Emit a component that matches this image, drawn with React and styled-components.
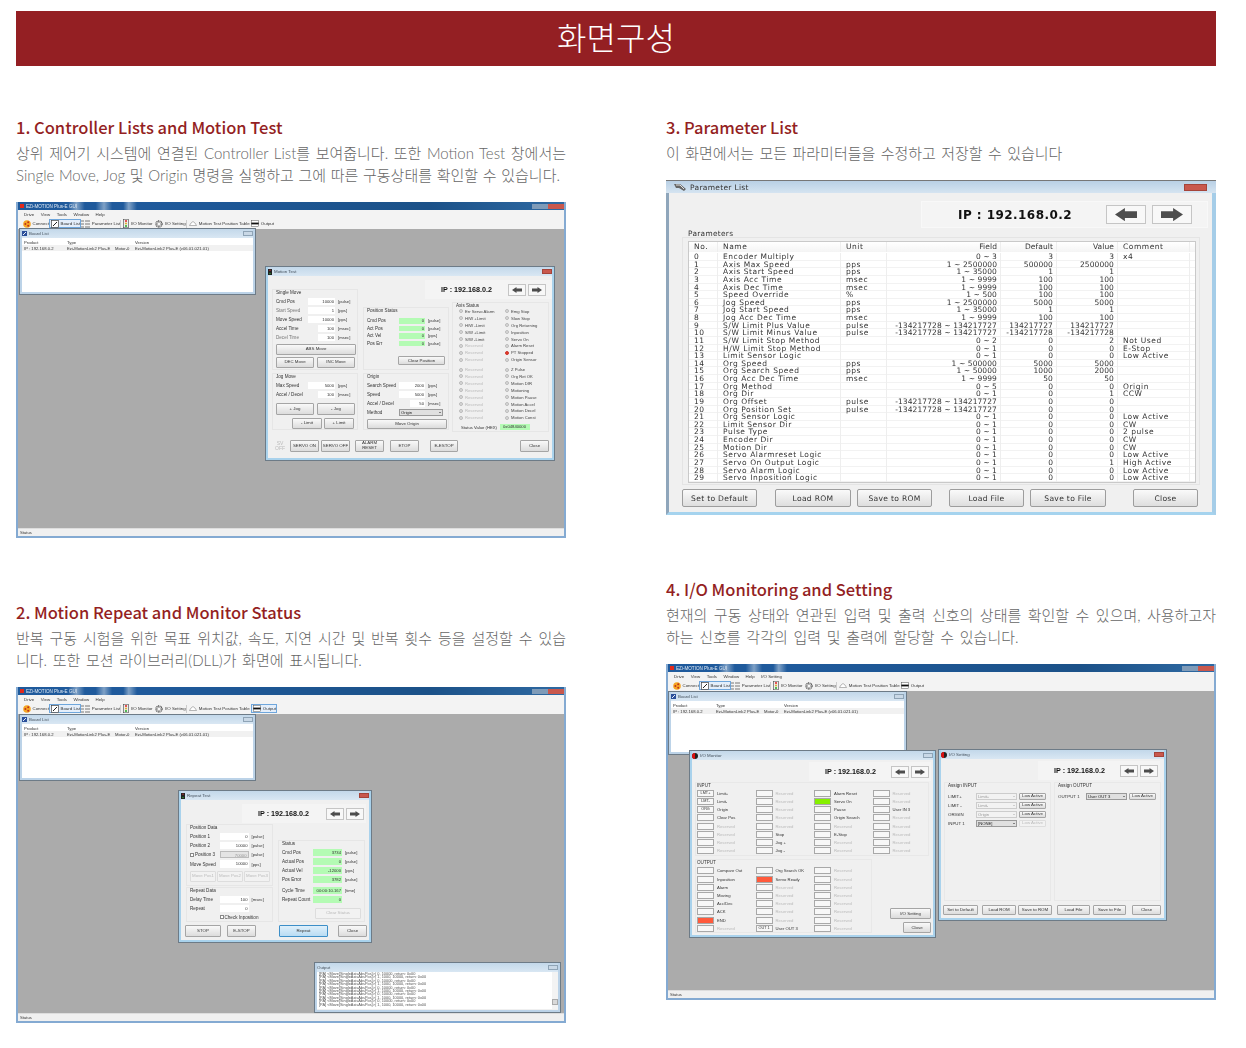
import React from 'react'
import styled, { createGlobalStyle } from 'styled-components'

const GlobalStyle = createGlobalStyle`
  html, body { margin: 0; padding: 0; background: #fff; }
  * { box-sizing: border-box; }
`

const TOOLS = [
  { name: 'Connect', icon: 'connect', w: 26 },
  { name: 'Board List', icon: 'board', w: 29, boxed: true },
  { name: 'Parameter List', icon: 'param', w: 38, sep: true },
  { name: 'I/O Monitor', icon: 'monitor', w: 32 },
  { name: 'I/O Setting', icon: 'gear', w: 31, sep: true },
  { name: 'Motion Test', icon: 'motion', w: 33 },
  { name: 'Position Table', w: 29 },
  { name: 'Output', icon: 'output', w: 24 },
]

const PARAMS = [
  ['Encoder Multiply', '', '0 ~ 3', '3', '3', 'x4'],
  ['Axis Max Speed', 'pps', '1 ~ 2500000', '500000', '2500000', ''],
  ['Axis Start Speed', 'pps', '1 ~ 35000', '1', '1', ''],
  ['Axis Acc Time', 'msec', '1 ~ 9999', '100', '100', ''],
  ['Axis Dec Time', 'msec', '1 ~ 9999', '100', '100', ''],
  ['Speed Override', '%', '1 ~ 500', '100', '100', ''],
  ['Jog Speed', 'pps', '1 ~ 2500000', '5000', '5000', ''],
  ['Jog Start Speed', 'pps', '1 ~ 35000', '1', '1', ''],
  ['Jog Acc Dec Time', 'msec', '1 ~ 9999', '100', '100', ''],
  ['S/W Limit Plus Value', 'pulse', '-134217728 ~ 134217727', '134217727', '134217727', ''],
  ['S/W Limit Minus Value', 'pulse', '-134217728 ~ 134217727', '-134217728', '-134217728', ''],
  ['S/W Limit Stop Method', '', '0 ~ 2', '0', '2', 'Not Used'],
  ['H/W Limit Stop Method', '', '0 ~ 1', '0', '0', 'E-Stop'],
  ['Limit Sensor Logic', '', '0 ~ 1', '0', '0', 'Low Active'],
  ['Org Speed', 'pps', '1 ~ 500000', '5000', '5000', ''],
  ['Org Search Speed', 'pps', '1 ~ 50000', '1000', '2000', ''],
  ['Org Acc Dec Time', 'msec', '1 ~ 9999', '50', '50', ''],
  ['Org Method', '', '0 ~ 5', '0', '0', 'Origin'],
  ['Org Dir', '', '0 ~ 1', '0', '1', 'CCW'],
  ['Org Offset', 'pulse', '-134217728 ~ 134217727', '0', '0', ''],
  ['Org Position Set', 'pulse', '-134217728 ~ 134217727', '0', '0', ''],
  ['Org Sensor Logic', '', '0 ~ 1', '0', '0', 'Low Active'],
  ['Limit Sensor Dir', '', '0 ~ 1', '0', '0', 'CW'],
  ['Pulse Type', '', '0 ~ 1', '0', '0', '2 pulse'],
  ['Encoder Dir', '', '0 ~ 1', '0', '0', 'CW'],
  ['Motion Dir', '', '0 ~ 1', '0', '0', 'CW'],
  ['Servo Alarmreset Logic', '', '0 ~ 1', '0', '0', 'Low Active'],
  ['Servo On Output Logic', '', '0 ~ 1', '0', '1', 'High Active'],
  ['Servo Alarm Logic', '', '0 ~ 1', '0', '0', 'Low Active'],
  ['Servo Inposition Logic', '', '0 ~ 1', '0', '0', 'Low Active'],
]

const AXIS_LEFT = ['Err Servo Alarm', 'H/W +Limit', 'H/W -Limit', 'S/W +Limit', 'S/W -Limit', 'Reserved', 'Reserved', 'Reserved']
const AXIS_RIGHT = ['Emg Stop', 'Slow Stop', 'Org Returning', 'Inposition', 'Servo On', 'Alarm Reset', 'PT Stopped', 'Origin Sensor']
const AXIS_RIGHT2 = ['Z Pulse', 'Org Ret OK', 'Motion DIR', 'Motioning', 'Motion Pause', 'Motion Accel', 'Motion Decel', 'Motion Const']

const R = 'Reserved'
const IO_INPUT = [
  ['LMT+', 'Limit+'], ['LMT-', 'Limit-'], ['ORG', 'Origin'], ['', 'Clear Pos'], ['', R], ['', R], ['', R], ['', R],
  ['', R], ['', R], ['', R], ['', R], ['', R], ['', 'Stop'], ['', 'Jog +'], ['', 'Jog -'],
  ['', 'Alarm Reset'], ['', 'Servo On', 'green'], ['', 'Pause'], ['', 'Origin Search'], ['', R], ['', 'E-Stop'], ['', R], ['', R],
  ['', R], ['', R], ['', 'User IN 3'], ['', R], ['', R], ['', R], ['', R], ['', R],
]
const IO_OUTPUT = [
  ['', 'Compare Out'], ['', 'Inposition'], ['', 'Alarm'], ['', 'Moving'], ['', 'Acc/Dec'], ['', 'ACK'], ['', 'END', 'red'], ['', R],
  ['', 'Org Search OK'], ['', 'Servo Ready', 'red'], ['', R], ['', R], ['', R], ['', R], ['', R], ['OUT 1', 'User OUT 3'],
  ['', R], ['', R], ['', R], ['', R], ['', R], ['', R], ['', R], ['', R],
]

const OUTPUT_LINES = [
  '[PA] <Move[SingleAxisAbsPos]>( 0, 10000, return: 0x00',
  '[PA] <Move[SingleAxisAbsPos]>( 1, 1000, 10000, return: 0x00',
  '[PA] <Move[SingleAxisAbsPos]>( 0, 10000, return: 0x00',
  '[PA] <Move[SingleAxisAbsPos]>( 1, 1000, 10000, return: 0x00',
  '[PA] <Move[SingleAxisAbsPos]>( 0, 10000, return: 0x00',
  '[PA] <Move[SingleAxisAbsPos]>( 1, 1000, 10000, return: 0x00',
  '[PA] <Move[SingleAxisAbsPos]>( 0, 10000, return: 0x00',
  '[PA] <Move[SingleAxisAbsPos]>( 1, 1000, 10000, return: 0x00',
  '[PA] <Move[SingleAxisAbsPos]>( 0, 10000, return: 0x00',
  '[PA] <Move[SingleAxisAbsPos]>( 1, 1000, 10000, return: 0x00',
]

const ToolIcon = ({ type }) => {
  if (type === 'connect') return (
    <svg width="8" height="8" viewBox="0 0 8 8"><circle cx="4" cy="4" r="3.8" fill="#f5a623" /><circle cx="2.4" cy="4" r="1" fill="#c0301c" /><circle cx="5.2" cy="2.3" r="1" fill="#c0301c" /><circle cx="5.2" cy="5.7" r="1" fill="#c0301c" /></svg>
  )
  if (type === 'board') return (
    <svg width="8" height="8" viewBox="0 0 8 8"><rect x=".5" y=".5" width="7" height="7" fill="#fff" stroke="#444" strokeWidth=".7" /><path d="M2 6 L6 2" stroke="#222" strokeWidth="1" /></svg>
  )
  if (type === 'param') return (
    <svg width="9" height="8" viewBox="0 0 9 8"><path d="M0 1 H3 M4 1 H9 M0 4 H3 M4 4 H9 M0 7 H3 M4 7 H9" stroke="#555" strokeWidth=".8" /></svg>
  )
  if (type === 'monitor') return (
    <svg width="6" height="9" viewBox="0 0 6 9"><rect x=".5" y=".2" width="5" height="8.6" fill="#eee" stroke="#444" strokeWidth=".6" /><circle cx="3" cy="2" r="1" fill="#d22" /><circle cx="3" cy="4.5" r="1" fill="#da2" /><circle cx="3" cy="7" r="1" fill="#2a2" /></svg>
  )
  if (type === 'gear') return (
    <svg width="8" height="8" viewBox="0 0 8 8"><circle cx="4" cy="4" r="3" fill="none" stroke="#444" strokeWidth="1.3" strokeDasharray="1 .6" /><circle cx="4" cy="4" r="1.6" fill="#fff" stroke="#777" strokeWidth=".5" /></svg>
  )
  if (type === 'motion') return (
    <svg width="8" height="7" viewBox="0 0 8 7"><path d="M.5 5.5 L2 3 Q4 0 6 3 L7.5 5.5 Z" fill="#fff" stroke="#888" strokeWidth=".6" /></svg>
  )
  if (type === 'output') return (
    <svg width="8" height="7" viewBox="0 0 8 7"><rect x=".3" y=".5" width="7.4" height="6" fill="#fff" stroke="#555" strokeWidth=".5" /><rect x=".3" y="2.6" width="7.4" height="1.8" fill="#111" /></svg>
  )
  return null
}

const TitleIcon = ({ type }) => {
  if (type === 'board') return (
    <svg width="5" height="5" viewBox="0 0 5 5"><rect width="5" height="5" fill="#2a4f9a" /><path d="M1 4 L4 1" stroke="#fff" strokeWidth=".9" /></svg>
  )
  if (type === 'traffic') return (
    <svg width="4" height="6" viewBox="0 0 4 6"><rect width="4" height="6" fill="#222" /><circle cx="2" cy="1.3" r=".7" fill="#c33" /><circle cx="2" cy="4.5" r=".7" fill="#3a3" /></svg>
  )
  if (type === 'io') return (
    <svg width="6" height="6" viewBox="0 0 6 6"><circle cx="3" cy="3" r="3" fill="#222" /><path d="M3 0 A3 3 0 0 0 3 6 Z" fill="#d11" /></svg>
  )
  if (type === 'tool') return (
    <svg width="14" height="9" viewBox="0 0 14 9"><path d="M1 1 L7 1 L13 6 L11 8 L6 5 L3 5 Z" fill="#666" /><path d="M3 2 L7 2 L11 6" stroke="#fff" strokeWidth=".8" fill="none" /></svg>
  )
  return null
}

const ArrowIcon = ({ dir, size }) => (
  <svg width={size} height={size * 0.6} viewBox="0 0 20 12">
    <polygon
      points={dir === 'left' ? '0,6 9,0 9,3 20,3 20,9 9,9 9,12' : '20,6 11,0 11,3 0,3 0,9 11,9 11,12'}
      fill="#4d4d4d"
    />
  </svg>
)

const Field = ({ label, val, unit, lw, sw, w, h = 9, green, off, muted }) => (
  <FieldRow $h={h}>
    <FieldLabel $w={lw} $muted={muted}>{label}</FieldLabel>
    <FieldSlot $w={sw}>
      <FieldInput $w={w} $h={h - 2} $green={green} $off={off}>{val}</FieldInput>
    </FieldSlot>
    {unit && <FieldUnit>{unit}</FieldUnit>}
  </FieldRow>
)

const IpHeader = ({ w, lead, rp }) => (
  <IpPanel $w={w} $lead={lead} $rp={rp}>
    <IpText>IP : 192.168.0.2</IpText>
    <ArrowBtn $ml="auto"><ArrowIcon dir="left" size={10} /></ArrowBtn>
    <ArrowBtn><ArrowIcon dir="right" size={10} /></ArrowBtn>
  </IpPanel>
)

const WinTitle = ({ icon, title, active }) => (
  <WinBar>
    <TitleIcon type={icon} />
    <WinName>{title}</WinName>
    <WinClose $active={active} />
  </WinBar>
)

const BoardList = ({ x, y, w, h, name }) => (
  <Win $x={x} $y={y} $w={w} $h={h} $dim>
    <WinTitle icon="board" title="Board List" />
    <ListArea>
      <ListHead>
        <ListCell $w={43}>Product</ListCell>
        <ListCell $w={68}>Type</ListCell>
        <ListCell>Version</ListCell>
      </ListHead>
      <ListRow>
        <ListCell $w={43}>{name}</ListCell>
        <ListCell $w={48}>Ezi-MotionLink2 Plus-E</ListCell>
        <ListCell $w={20}>Motor-0</ListCell>
        <ListCell>Ezi-MotionLink2 Plus-E (v06.01.021.01)</ListCell>
      </ListRow>
    </ListArea>
  </Win>
)

const Desktop = ({ extraMenu, highlight, children }) => (
  <Shot>
    <AppBar>
      <AppLogo />
      <AppName>EZi-MOTION Plus-E GUI</AppName>
      <AppButtons><AppBtn /><AppBtn /><AppBtn $close /></AppButtons>
    </AppBar>
    <MenuBar>
      {['Drive', 'View', 'Tools', 'Window', 'Help'].map((m) => <MenuItem key={m}>{m}</MenuItem>)}
      {extraMenu && <MenuItem>{extraMenu}</MenuItem>}
    </MenuBar>
    <ToolBar>
      {TOOLS.map((t) => (
        <React.Fragment key={t.name}>
          <ToolBtn $w={t.w} $boxed={t.boxed || highlight === t.name}>
            <ToolIcon type={t.icon} />
            <span>{t.name}</span>
          </ToolBtn>
          {t.sep && <ToolSep />}
        </React.Fragment>
      ))}
    </ToolBar>
    <Canvas>{children}</Canvas>
    <StatusBar>Status</StatusBar>
  </Shot>
)

const MotionTest = () => (
  <Win $x={248} $y={38} $w={288} $h={193}>
    <WinTitle icon="traffic" title="Motion Test" active />
    <MotionGrid>
      <MotionLeft>
        <Group $h={81}>
          <GroupName>Single Move</GroupName>
          <Field label="Cmd Pos" val="10000" unit="[pulse]" lw={32} sw={27} w={27} />
          <Field label="Start Speed" val="1" unit="[pps]" lw={32} sw={27} w={27} muted />
          <Field label="Move Speed" val="10000" unit="[pps]" lw={32} sw={27} w={27} />
          <Field label="Accel Time" val="100" unit="[msec]" lw={32} sw={27} w={17} />
          <Field label="Decel Time" val="100" unit="[msec]" lw={32} sw={27} w={17} muted />
          <BtnRow $top={2}><Btn $w={80} $h={11}>ABS Move</Btn></BtnRow>
          <BtnRow $top={2} $gap={3}>
            <Btn $w={38} $h={11}>DEC Move</Btn>
            <Btn $w={38} $h={11}>INC Move</Btn>
          </BtnRow>
        </Group>
        <Group $h={57}>
          <GroupName>Jog Move</GroupName>
          <Field label="Max Speed" val="5000" unit="[pps]" lw={32} sw={27} w={27} />
          <Field label="Accel / Decel" val="100" unit="[msec]" lw={32} sw={27} w={17} />
          <BtnRow $top={4} $gap={3}>
            <Btn $w={38} $h={12}>+ Jog</Btn>
            <Btn $w={38} $h={12}>- Jog</Btn>
          </BtnRow>
          <BtnRow $top={3} $gap={2} $end>
            <Btn $w={30} $h={11}>- Limit</Btn>
            <Btn $w={30} $h={11}>+ Limit</Btn>
          </BtnRow>
        </Group>
      </MotionLeft>
      <IpSlot>
        <IpHeader w={127} lead={16} rp={6} />
      </IpSlot>
      <MotionMid>
        <Group $h={63}>
          <GroupName $mb={2}>Position Status</GroupName>
          <Field label="Cmd Pos" val="0" unit="[pulse]" lw={32} sw={26} w={26} h={7.6} green />
          <Field label="Act Pos" val="0" unit="[pulse]" lw={32} sw={26} w={26} h={7.6} green />
          <Field label="Act Vel" val="0" unit="[pps]" lw={32} sw={26} w={26} h={7.6} green />
          <Field label="Pos Err" val="0" unit="[pulse]" lw={32} sw={26} w={26} h={7.6} green />
          <BtnRow $top={9} $end><Btn $w={47} $h={9}>Clear Position</Btn></BtnRow>
        </Group>
        <Group $h={57}>
          <GroupName>Origin</GroupName>
          <Field label="Search Speed" val="2000" unit="[pps]" lw={32} sw={26} w={26} />
          <Field label="Speed" val="5000" unit="[pps]" lw={32} sw={26} w={26} />
          <Field label="Accel / Decel" val="50" unit="[msec]" lw={32} sw={26} w={15} />
          <FieldRow $h={9}>
            <FieldLabel $w={32}>Method</FieldLabel>
            <SelectBox $w={44} $h={7}>Origin</SelectBox>
          </FieldRow>
          <BtnRow $top={2}><Btn $w={80} $h={10}>Move Origin</Btn></BtnRow>
        </Group>
      </MotionMid>
      <MotionRight>
        <Group $h={130}>
          <GroupName $mb={-2}>Axis Status</GroupName>
          <LedGrid>
            {AXIS_LEFT.map((t, i) => <Led key={i} $off={t === R}><LedDot />{t}</Led>)}
            {AXIS_RIGHT.map((t) => <Led key={t}><LedDot $on={t === 'PT Stopped'} />{t}</Led>)}
          </LedGrid>
          <LedGrid $top={3}>
            {Array.from({ length: 8 }).map((_, i) => <Led key={i} $off><LedDot />{R}</Led>)}
            {AXIS_RIGHT2.map((t) => <Led key={t}><LedDot />{t}</Led>)}
          </LedGrid>
          <StatusValue>
            <span>Status Value (HEX)</span>
            <FieldInput $w={30} $h={6} $green $center>0x04840000</FieldInput>
          </StatusValue>
        </Group>
      </MotionRight>
    </MotionGrid>
    <BottomStrip>
      <SvOff>SV<br />OFF</SvOff>
      <Btn $w={29} $h={12}>SERVO ON</Btn>
      <Btn $w={29} $h={12}>SERVO OFF</Btn>
      <Btn $w={29} $h={12} $ml={3}>ALARM<br />RESET</Btn>
      <Btn $w={29} $h={12} $ml={4}>ETOP</Btn>
      <Btn $w={28} $h={12} $ml={9}>E-ESTOP</Btn>
      <Btn $w={29} $h={12} $ml="auto">Close</Btn>
    </BottomStrip>
  </Win>
)

const RepeatTest = () => (
  <Win $x={161} $y={77} $w={192} $h={151}>
    <WinTitle icon="traffic" title="Repeat Test" active />
    <RepeatTop><IpHeader w={124} lead={16} rp={2} /></RepeatTop>
    <RepeatGrid>
      <RepeatCol>
        <Group $h={62}>
          <GroupName>Position Data</GroupName>
          <Field label="Position 1" val="0" unit="[pulse]" lw={29.5} sw={29} w={29} />
          <Field label="Position 2" val="10000" unit="[pulse]" lw={29.5} sw={29} w={29} />
          <FieldRow $h={9}>
            <CheckBox />
            <FieldLabel $w={24.5}>Position 3</FieldLabel>
            <FieldSlot $w={29}><FieldInput $w={29} $h={7} $off>70000</FieldInput></FieldSlot>
            <FieldUnit>[pulse]</FieldUnit>
          </FieldRow>
          <Field label="Move Speed" val="10000" unit="[pps]" lw={29.5} sw={29} w={29} h={10} />
          <BtnRow $top={2} $gap={1}>
            <Btn $w={26} $h={11} $off>Move Pos1</Btn>
            <Btn $w={26} $h={11} $off>Move Pos2</Btn>
            <Btn $w={26} $h={11} $off>Move Pos3</Btn>
          </BtnRow>
        </Group>
        <Group $h={35}>
          <GroupName>Repeat Data</GroupName>
          <Field label="Delay Time" val="100" unit="[msec]" lw={29.5} sw={29} w={29} />
          <Field label="Repeat" val="0" lw={29.5} sw={29} w={29} />
          <FieldRow $h={8}>
            <FieldLabel $w={29.5} />
            <CheckBox />
            <FieldLabel>Check Inposition</FieldLabel>
          </FieldRow>
        </Group>
      </RepeatCol>
      <Group $h={82} $top={16}>
        <GroupName>Status</GroupName>
        <Field label="Cmd Pos" val="3734" unit="[pulse]" lw={31} sw={29} w={29} green />
        <Field label="Actual Pos" val="0" unit="[pulse]" lw={31} sw={29} w={29} green />
        <Field label="Actual Vel" val="-12000" unit="[pps]" lw={31} sw={29} w={29} green />
        <Field label="Pos Error" val="3782" unit="[pulse]" lw={31} sw={29} w={29} green />
        <FieldRow $h={1.5} />
        <Field label="Cycle Time" val="00:00:10.167" unit="[time]" lw={31} sw={29} w={29} green />
        <Field label="Repeat Count" val="0" lw={31} sw={29} w={29} green />
        <BtnRow $top={4} $end><Btn $w={46} $h={11} $off>Clear Status</Btn></BtnRow>
      </Group>
    </RepeatGrid>
    <RepeatBottom>
      <Btn $w={36} $h={12}>STOP</Btn>
      <Btn $w={29} $h={12} $ml={6}>E-STOP</Btn>
      <Btn $w={49} $h={12} $ml={23} $primary>Repeat</Btn>
      <Btn $w={29} $h={12} $ml={10}>Close</Btn>
    </RepeatBottom>
  </Win>
)

const OutputWin = () => (
  <Win $x={297} $y={249} $w={245} $h={49} $dim>
    <WinTitle icon="" title="Output" />
    <OutputArea>
      <OutputText>
        {OUTPUT_LINES.map((l, i) => <div key={i}>{l}</div>)}
      </OutputText>
      <ScrollBar><ScrollThumb /></ScrollBar>
    </OutputArea>
  </Win>
)

const IoCell = ({ cell }) => (
  <IoItem>
    <IoBox $state={cell[2]}>{cell[0]}</IoBox>
    <IoText $off={cell[1] === R}>{cell[1]}</IoText>
  </IoItem>
)

const IoMonitor = () => (
  <Win $x={22} $y={60} $w={245} $h={186}>
    <WinTitle icon="io" title="I/O Monitor" />
    <IoTop><IpHeader w={122} lead={16} rp={2} /></IoTop>
    <IoGroup $w={234} $top={1}>
      <GroupName $h={6.3}>INPUT</GroupName>
      <IoGrid $cols={4}>
        {IO_INPUT.map((c, i) => <IoCell key={i} cell={c} />)}
      </IoGrid>
    </IoGroup>
    <IoBottom>
      <IoGroup $w={177} $top={3}>
        <GroupName>OUTPUT</GroupName>
        <IoGrid $cols={3}>
          {IO_OUTPUT.map((c, i) => <IoCell key={i} cell={c} />)}
        </IoGrid>
      </IoGroup>
      <IoActions>
        <Btn $w={41} $h={11}>I/O Setting</Btn>
        <Btn $w={28} $h={11}>Close</Btn>
      </IoActions>
    </IoBottom>
  </Win>
)

const AssignRow = ({ label, val, off, btnOff }) => (
  <FieldRow $h={9}>
    <FieldLabel $w={28}>{label}</FieldLabel>
    <SelectBox $w={41} $h={7} $off={off}>{val}</SelectBox>
    <Btn $w={27} $h={7} $ml={2} $off={btnOff}>Low Active</Btn>
  </FieldRow>
)

const IoSetting = () => (
  <Win $x={271} $y={59} $w={227} $h={170}>
    <WinTitle icon="io" title="I/O Setting" active />
    <IoTop $end={4}><IpHeader w={122} lead={16} rp={2} /></IoTop>
    <AssignGrid>
      <AssignGroup>
        <GroupName>Assign INPUT</GroupName>
        <AssignBody>
          <AssignRow label="LIMIT+" val="Limit+" off />
          <AssignRow label="LIMIT -" val="Limit-" off />
          <AssignRow label="ORIGIN" val="Origin" off />
          <AssignRow label="INPUT 1" val="[NONE]" btnOff />
        </AssignBody>
      </AssignGroup>
      <AssignGroup>
        <GroupName>Assign OUTPUT</GroupName>
        <AssignBody>
          <AssignRow label="OUTPUT 1" val="User OUT 3" />
        </AssignBody>
      </AssignGroup>
    </AssignGrid>
    <AssignFooter>
      <Btn $w={35} $h={10}>Set to Default</Btn>
      <Btn $w={34} $h={10} $ml={4}>Load ROM</Btn>
      <Btn $w={34} $h={10} $ml={2}>Save to ROM</Btn>
      <Btn $w={33} $h={10} $ml={5}>Load File</Btn>
      <Btn $w={33} $h={10} $ml={3}>Save to File</Btn>
      <Btn $w={29} $h={10} $ml={6}>Close</Btn>
    </AssignFooter>
  </Win>
)

const ParameterList = () => (
  <ParamShot>
    <ParamBar>
      <TitleIcon type="tool" />
      <ParamName>Parameter List</ParamName>
      <ParamClose />
    </ParamBar>
    <ParamBody>
      <ParamIp>
        <ParamIpText>IP : 192.168.0.2</ParamIpText>
        <ParamArrow $ml="auto"><ArrowIcon dir="left" size={22} /></ParamArrow>
        <ParamArrow><ArrowIcon dir="right" size={22} /></ParamArrow>
      </ParamIp>
      <ParamGroupName>Parameters</ParamGroupName>
      <ParamGroup>
        <ParamTable>
          <ParamHead>
            <ParamCell>No.</ParamCell>
            <ParamCell>Name</ParamCell>
            <ParamCell>Unit</ParamCell>
            <ParamCell $right>Field</ParamCell>
            <ParamCell $right>Default</ParamCell>
            <ParamCell $right>Value</ParamCell>
            <ParamCell>Comment</ParamCell>
          </ParamHead>
          {PARAMS.map((p, i) => (
            <ParamRow key={i}>
              <ParamCell>{i}</ParamCell>
              <ParamCell>{p[0]}</ParamCell>
              <ParamCell>{p[1]}</ParamCell>
              <ParamCell $right>{p[2]}</ParamCell>
              <ParamCell $right>{p[3]}</ParamCell>
              <ParamCell $right>{p[4]}</ParamCell>
              <ParamCell>{p[5]}</ParamCell>
            </ParamRow>
          ))}
        </ParamTable>
      </ParamGroup>
      <ParamFooter>
        <ParamBtn $w={75}>Set to Default</ParamBtn>
        <ParamBtn $w={76} $ml={18}>Load ROM</ParamBtn>
        <ParamBtn $w={75} $ml={6}>Save to ROM</ParamBtn>
        <ParamBtn $w={75} $ml={17}>Load File</ParamBtn>
        <ParamBtn $w={76} $ml={6}>Save to File</ParamBtn>
        <ParamBtn $w={65} $ml={27}>Close</ParamBtn>
      </ParamFooter>
    </ParamBody>
  </ParamShot>
)

const App = () => (
  <Page>
    <GlobalStyle />
    <Banner>화면구성</Banner>
    <Columns>
      <Column>
        <Section>
          <SectionTitle>1. Controller Lists and Motion Test</SectionTitle>
          <SectionText $ws={0.6}>상위 제어기 시스템에 연결된 Controller List를 보여줍니다. 또한 Motion Test 창에서는 Single Move, Jog 및 Origin 명령을 실행하고 그에 따른 구동상태를 확인할 수 있습니다.</SectionText>
          <Desktop>
            <BoardList x={2} y={0} w={235} h={65} name="IP : 192.168.0.2" />
            <MotionTest />
          </Desktop>
        </Section>
        <Section $gap={63}>
          <SectionTitle>2. Motion Repeat and Monitor Status</SectionTitle>
          <SectionText>반복 구동 시험을 위한 목표 위치값, 속도, 지연 시간 및 반복 횟수 등을 설정할 수 있습니다. 또한 모션 라이브러리(DLL)가 화면에 표시됩니다.</SectionText>
          <Desktop highlight="Output">
            <BoardList x={2} y={1} w={235} h={65} name="IP : 192.168.0.2" />
            <RepeatTest />
            <OutputWin />
          </Desktop>
        </Section>
      </Column>
      <Column>
        <Section>
          <SectionTitle>3. Parameter List</SectionTitle>
          <SectionText $ws={1.3}>이 화면에서는 모든 파라미터들을 수정하고 저장할 수 있습니다</SectionText>
          <ParameterList />
        </Section>
        <Section $gap={63}>
          <SectionTitle>4. I/O Monitoring and Setting</SectionTitle>
          <SectionText>현재의 구동 상태와 연관된 입력 및 출력 신호의 상태를 확인할 수 있으며, 사용하고자 하는 신호를 각각의 입력 및 출력에 할당할 수 있습니다.</SectionText>
          <Desktop extraMenu="I/O Setting">
            <BoardList x={1} y={1} w={237} h={62} name="IP : 192.168.0.2" />
            <IoMonitor />
            <IoSetting />
          </Desktop>
        </Section>
      </Column>
    </Columns>
  </Page>
)

export default App

const Page = styled.div`
  width: 1246px;
  padding: 11px 30px 0 16px;
  font-family: "Noto Sans CJK KR", "Noto Sans", sans-serif;
`
const Banner = styled.h1`
  margin: 0;
  height: 55px;
  background: #941f23;
  color: #fff;
  font-size: 32px;
  font-weight: 300;
  line-height: 50px;
  text-align: center;
`
const Columns = styled.div`
  display: grid;
  grid-template-columns: 550px 550px;
  column-gap: 100px;
  padding-top: 50px;
`
const Column = styled.div`
  display: flex;
  flex-direction: column;
`
const Section = styled.section`
  display: flex;
  flex-direction: column;
  margin-top: ${(p) => p.$gap || 0}px;
`
const SectionTitle = styled.h2`
  margin: 0 0 4px;
  color: #941f23;
  font-size: 16.5px;
  font-weight: 500;
  line-height: 22px;
`
const SectionText = styled.p`
  margin: 0 0 16px;
  color: #666;
  font-family: Lato, "Noto Sans CJK KR", sans-serif;
  font-size: 15px;
  font-weight: 300;
  line-height: 22px;
  text-align: justify;
  word-break: break-all;
  word-spacing: ${(p) => p.$ws || 1.6}px;
`

const Shot = styled.div`
  display: flex;
  flex-direction: column;
  height: 336px;
  border: 2px solid #84aad2;
  border-top: 0;
  background: #ababab;
  font-family: "Liberation Sans", Arial, sans-serif;
  color: #333;
  filter: blur(0.45px);
  overflow: hidden;
`
const AppBar = styled.div`
  display: flex;
  align-items: center;
  flex: 0 0 8px;
  margin: 0 -2px;
  padding: 0 2px 0 4px;
  background: linear-gradient(90deg, #1f5a9c 0, #1f5a9c 9.5%, #7fa1c6 11%, #1f5a9c 12.5%, #1f5a9c 14.5%, #7fa1c6 16%, #1f5a9c 17.5%, #1f5a9c 19.5%, #7fa1c6 20.5%, #1f5a9c 22%, #1b5188 75%, #2f6aa3 100%);
`
const AppLogo = styled.span`
  width: 4px;
  height: 4px;
  background: #e0291c;
`
const AppName = styled.span`
  margin-left: 2px;
  color: #dfe8f2;
  font-size: 4.6px;
`
const AppButtons = styled.div`
  display: flex;
  margin-left: auto;
`
const AppBtn = styled.span`
  width: ${(p) => (p.$close ? 16 : 8)}px;
  height: 5px;
  background: ${(p) => (p.$close ? '#c9584d' : '#7f9bb8')};
`
const MenuBar = styled.div`
  display: flex;
  align-items: center;
  gap: 6.5px;
  flex: 0 0 8px;
  padding-left: 6px;
  background: #f3f3f3;
  font-size: 4.4px;
`
const MenuItem = styled.span``
const ToolBar = styled.div`
  display: flex;
  align-items: center;
  flex: 0 0 11px;
  padding-left: 5px;
  background: #f3f3f3;
  font-size: 4.4px;
  white-space: nowrap;
`
const ToolBtn = styled.div`
  display: flex;
  align-items: center;
  justify-content: flex-start;
  gap: 1.5px;
  flex: 0 0 ${(p) => p.$w}px;
  height: 9px;
  padding-left: ${(p) => (p.$boxed ? 1 : 0)}px;
  border: ${(p) => (p.$boxed ? '.7px solid #6ea6dc' : '0')};
  background: ${(p) => (p.$boxed ? '#e4eefa' : 'transparent')};
`
const ToolSep = styled.span`
  flex: 0 0 1px;
  height: 8px;
  margin: 0 2px 0 0;
  background: #ccc;
`
const Canvas = styled.div`
  position: relative;
  flex: 1;
  background: #ababab;
`
const StatusBar = styled.div`
  flex: 0 0 8px;
  padding-left: 2px;
  background: #f0f0f0;
  border-top: 1px solid #ddd;
  font-size: 4.2px;
  line-height: 7px;
`
const Win = styled.div`
  position: absolute;
  left: ${(p) => p.$x}px;
  top: ${(p) => p.$y}px;
  width: ${(p) => p.$w}px;
  height: ${(p) => p.$h}px;
  display: flex;
  flex-direction: column;
  background: #f0f0f0;
  border: 2px solid ${(p) => (p.$dim ? '#bcd3e8' : '#a9d2ec')};
  border-top: 0;
  outline: .6px solid #6d7b87;
  overflow: hidden;
`
const WinBar = styled.div`
  display: flex;
  align-items: center;
  gap: 2px;
  flex: 0 0 9px;
  padding: 0 2px;
  margin: 0 -2px;
  background: linear-gradient(#c3d8ea, #d9e7f3);
`
const WinName = styled.span`
  font-size: 4.4px;
  color: #44505c;
`
const WinClose = styled.span`
  width: 10px;
  height: 5px;
  margin-left: auto;
  background: ${(p) => (p.$active ? '#c9584d' : '#c9d8e6')};
  border: .5px solid ${(p) => (p.$active ? '#a5443a' : '#8fa4b6')};
`
const ListArea = styled.div`
  flex: 1;
  background: #fff;
  padding-top: 1px;
  font-size: 4.2px;
  white-space: nowrap;
`
const ListHead = styled.div`
  display: flex;
  align-items: center;
  height: 6px;
  padding-left: 2px;
`
const ListRow = styled(ListHead)`
  background: #f1f1f1;
`
const ListCell = styled.span`
  flex: 0 0 ${(p) => (p.$w ? `${p.$w}px` : 'auto')};
  overflow: hidden;
`
const MotionGrid = styled.div`
  display: grid;
  grid-template-columns: 91px 89px 97px;
  grid-template-rows: 19px 1fr;
  height: 156px;
  padding: 4px 0 0 4px;
  font-size: 4.6px;
`
const MotionLeft = styled.div`
  grid-column: 1;
  grid-row: 1 / 3;
  display: flex;
  flex-direction: column;
  gap: 3px;
  margin-top: 9px;
  padding-right: 5px;
`
const IpSlot = styled.div`
  grid-column: 2 / 4;
  grid-row: 1;
  justify-self: end;
  margin-right: -3px;
`
const MotionMid = styled.div`
  grid-column: 2;
  grid-row: 2;
  display: flex;
  flex-direction: column;
  gap: 3px;
  margin-top: 8px;
  padding-right: 3px;
`
const MotionRight = styled.div`
  grid-column: 3;
  grid-row: 2;
  margin-top: 3px;
`
const Group = styled.div`
  height: ${(p) => p.$h}px;
  margin-top: ${(p) => p.$top || 0}px;
  padding: 0 2px 0 3px;
  border: .6px solid #e6e6e6;
  font-size: 4.6px;
`
const GroupName = styled.div`
  height: ${(p) => p.$h || 7}px;
  margin-bottom: ${(p) => p.$mb || 0}px;
  line-height: 6px;
  color: #333;
  font-size: 4.6px;
`
const FieldRow = styled.div`
  display: flex;
  align-items: center;
  height: ${(p) => p.$h}px;
  white-space: nowrap;
`
const FieldLabel = styled.span`
  flex: 0 0 ${(p) => (p.$w ? `${p.$w}px` : 'auto')};
  color: ${(p) => (p.$muted ? '#777' : '#333')};
`
const FieldSlot = styled.span`
  flex: 0 0 ${(p) => p.$w}px;
  display: flex;
  justify-content: flex-end;
`
const FieldInput = styled.span`
  display: block;
  width: ${(p) => p.$w}px;
  height: ${(p) => p.$h}px;
  padding-right: 1px;
  background: ${(p) => (p.$green ? '#b4fbb4' : p.$off ? '#e4e4e4' : '#fff')};
  color: ${(p) => (p.$off ? '#999' : '#333')};
  font-size: 4.2px;
  line-height: ${(p) => p.$h}px;
  text-align: ${(p) => (p.$center ? 'center' : 'right')};
  border: ${(p) => (p.$off ? '.5px solid #bbb' : '0')};
`
const FieldUnit = styled.span`
  margin-left: 3px;
  font-size: 4.2px;
`
const SelectBox = styled.span`
  display: flex;
  align-items: center;
  width: ${(p) => p.$w}px;
  height: ${(p) => p.$h}px;
  padding-left: 1px;
  background: ${(p) => (p.$off ? '#f2f2f2' : '#e0e0e0')};
  border: .6px solid ${(p) => (p.$off ? '#ccc' : '#999')};
  color: ${(p) => (p.$off ? '#999' : '#222')};
  font-size: 4.2px;
  &::after {
    content: '';
    margin-left: auto;
    margin-right: 1px;
    border: 1.2px solid transparent;
    border-top-color: ${(p) => (p.$off ? '#aaa' : '#222')};
    border-bottom: 0;
  }
`
const BtnRow = styled.div`
  display: flex;
  gap: ${(p) => p.$gap || 0}px;
  margin-top: ${(p) => p.$top || 0}px;
  justify-content: ${(p) => (p.$end ? 'flex-end' : 'flex-start')};
  padding-right: ${(p) => (p.$end ? 1 : 0)}px;
`
const Btn = styled.button`
  flex: 0 0 auto;
  width: ${(p) => p.$w}px;
  height: ${(p) => p.$h}px;
  margin: 0 0 0 ${(p) => (p.$ml === 'auto' ? 'auto' : `${p.$ml || 0}px`)};
  padding: 0;
  background: ${(p) => (p.$primary ? 'linear-gradient(#dff0fb, #b9dcf3)' : p.$off ? '#f2f2f2' : 'linear-gradient(#f9f9f9, #dcdcdc)')};
  border: .7px solid ${(p) => (p.$primary ? '#3d8fc8' : p.$off ? '#ddd' : '#a5a5a5')};
  border-radius: 1px;
  color: ${(p) => (p.$off ? '#bbb' : '#333')};
  font-family: "Liberation Sans", Arial, sans-serif;
  font-size: 4.4px;
  line-height: 4.6px;
  white-space: nowrap;
`
const ArrowBtn = styled.span`
  display: flex;
  align-items: center;
  justify-content: center;
  width: 18px;
  height: 12px;
  margin-left: ${(p) => p.$ml || '2px'};
  background: #f8f8f8;
  border: .7px solid #c5c5c5;
`
const IpPanel = styled.div`
  display: flex;
  align-items: center;
  width: ${(p) => p.$w}px;
  height: 19px;
  padding: 0 ${(p) => p.$rp}px 0 ${(p) => p.$lead}px;
  background: #f4f4f4;
`
const IpText = styled.span`
  color: #111;
  font-size: 7.2px;
  font-weight: 700;
  white-space: nowrap;
`
const LedGrid = styled.div`
  display: grid;
  grid-auto-flow: column;
  grid-template-columns: 46px 46px;
  grid-template-rows: repeat(8, 6.9px);
  margin-top: ${(p) => p.$top || 0}px;
  padding-left: 3px;
`
const Led = styled.div`
  display: flex;
  align-items: center;
  gap: 2px;
  color: ${(p) => (p.$off ? '#bbb' : '#444')};
  font-size: 4.2px;
  white-space: nowrap;
`
const LedDot = styled.span`
  flex: 0 0 4px;
  height: 4px;
  border-radius: 50%;
  background: ${(p) => (p.$on ? '#e8401f' : '#dcdcdc')};
  border: .4px solid ${(p) => (p.$on ? '#c33' : '#bbb')};
`
const StatusValue = styled.div`
  display: flex;
  align-items: center;
  gap: 3px;
  margin-top: 3px;
  padding-left: 5px;
  font-size: 4.2px;
`
const BottomStrip = styled.div`
  display: flex;
  align-items: center;
  flex: 0 0 20px;
  margin-top: 4px;
  padding: 0 3px 0 6px;
  gap: 2px;
`
const SvOff = styled.span`
  flex: 0 0 12px;
  color: #bbb;
  font-size: 5px;
  line-height: 5px;
  text-align: center;
  margin-right: 2px;
`
const RepeatTop = styled.div`
  display: flex;
  justify-content: flex-end;
  padding: 4px 3px 0 0;
  font-size: 4.6px;
`
const RepeatGrid = styled.div`
  display: grid;
  grid-template-columns: 87px 87px;
  column-gap: 5px;
  margin-top: 1px;
  padding-left: 5px;
  font-size: 4.6px;
`
const RepeatCol = styled.div`
  display: flex;
  flex-direction: column;
  gap: 1px;
`
const RepeatBottom = styled.div`
  display: flex;
  padding: 3px 0 0 4px;
`
const CheckBox = styled.span`
  flex: 0 0 4px;
  height: 4px;
  margin-right: 1px;
  background: #fff;
  border: .5px solid #888;
`
const OutputArea = styled.div`
  display: flex;
  flex: 1;
  margin-bottom: 1px;
  background: #fff;
`
const OutputText = styled.div`
  flex: 1;
  padding: 0 2px;
  color: #555;
  font-size: 3.9px;
  line-height: 3.4px;
  white-space: nowrap;
  overflow: hidden;
`
const ScrollBar = styled.div`
  display: flex;
  align-items: flex-end;
  flex: 0 0 6px;
  padding-bottom: 4px;
  background: #f3f3f3;
`
const ScrollThumb = styled.span`
  width: 100%;
  height: 6px;
  background: #d9d9d9;
  border: .5px solid #aaa;
`
const IoTop = styled.div`
  display: flex;
  justify-content: flex-end;
  padding: 2px ${(p) => p.$end || 2}px 0 0;
`
const IoGroup = styled.div`
  flex: 0 0 auto;
  width: ${(p) => p.$w}px;
  margin: ${(p) => p.$top}px 0 0 3px;
  padding-left: 1px;
  border: .6px solid #e8e8e8;
  font-size: 4.4px;
`
const IoBottom = styled.div`
  display: flex;
  align-items: flex-end;
`
const IoGrid = styled.div`
  display: grid;
  grid-auto-flow: column;
  grid-template-columns: repeat(${(p) => p.$cols}, 58.5px);
  grid-template-rows: repeat(8, 8.2px);
`
const IoItem = styled.div`
  display: flex;
  align-items: center;
  gap: 3px;
`
const IoBox = styled.span`
  flex: 0 0 17px;
  height: 7px;
  background: ${(p) => (p.$state === 'green' ? '#86f000' : p.$state === 'red' ? '#ff5a3c' : '#f7f7f7')};
  border: .7px solid #a8a8a8;
  color: #333;
  font-size: 3.8px;
  line-height: 5.6px;
  text-align: center;
`
const IoText = styled.span`
  color: ${(p) => (p.$off ? '#bbb' : '#333')};
  font-size: 4.2px;
  white-space: nowrap;
`
const IoActions = styled.div`
  display: flex;
  flex-direction: column;
  align-items: flex-end;
  gap: 3px;
  flex: 1;
  padding: 0 2px 0 0;
`
const AssignGrid = styled.div`
  display: grid;
  grid-template-columns: 107px 107px;
  gap: 3px;
  height: 119px;
  margin: 2px 0 0 3px;
`
const AssignGroup = styled.div`
  border: .6px solid #e8e8e8;
  padding: 0 2px 0 3px;
  font-size: 4.4px;
`
const AssignBody = styled.div`
  padding-top: 2px;
`
const AssignFooter = styled.div`
  display: flex;
  padding: 4px 0 0 2px;
`

const ParamShot = styled.div`
  display: flex;
  flex-direction: column;
  height: 335px;
  background: #f0f0f0;
  border-left: 3px solid #8fa6bb;
  border-right: 4px solid #a5cde8;
  border-bottom: 3px solid #a5d3ee;
  font-family: "DejaVu Sans", sans-serif;
  color: #333;
  filter: blur(0.25px);
`
const ParamBar = styled.div`
  display: flex;
  align-items: center;
  flex: 0 0 13px;
  margin: 0 -4px 0 -3px;
  padding: 0 9px 0 7px;
  border-top: 1px solid #777;
  background: linear-gradient(#b9d0e5, #d5e4f1);
`
const ParamName = styled.span`
  margin-left: 3px;
  font-size: 7.5px;
  letter-spacing: .3px;
`
const ParamClose = styled.span`
  width: 23px;
  height: 7px;
  margin-left: auto;
  background: #c9584d;
  border: .5px solid #a5443a;
`
const ParamBody = styled.div`
  display: flex;
  flex-direction: column;
  padding-top: 8px;
`
const ParamIp = styled.div`
  display: flex;
  align-items: center;
  align-self: flex-end;
  width: 287px;
  height: 27px;
  margin-right: 4px;
  padding: 0 15px 0 36px;
  background: #f4f4f4;
  border: 1px solid #f8f8f8;
`
const ParamIpText = styled.span`
  color: #111;
  font-size: 12px;
  font-weight: 700;
  letter-spacing: .45px;
  white-space: nowrap;
`
const ParamArrow = styled.span`
  display: flex;
  align-items: center;
  justify-content: center;
  width: 40px;
  height: 19px;
  margin-left: ${(p) => p.$ml || '6px'};
  background: #f8f8f8;
  border: 1px solid #c5c5c5;
`
const ParamGroupName = styled.div`
  height: 9px;
  padding-left: 19px;
  font-size: 7.4px;
  line-height: 12px;
  letter-spacing: .3px;
`
const ParamGroup = styled.div`
  width: 518px;
  height: 248px;
  margin-left: 13px;
  padding: 3px 0 0 5px;
  border: 1px solid #e4e4e4;
`
const ParamTable = styled.div`
  width: 508px;
  height: 242px;
  background: #fff;
  border: 1px solid #c9c9c9;
  font-size: 7.5px;
  letter-spacing: .55px;
  white-space: nowrap;
`
const ParamRow = styled.div`
  display: grid;
  grid-template-columns: 29px 123px 46px 114px 56px 61px 72px;
  height: 7.63px;
  line-height: 7.63px;
  border-bottom: .4px solid #f2f2f2;
`
const ParamHead = styled(ParamRow)`
  height: 10px;
  line-height: 10px;
  margin-bottom: 1px;
  background: linear-gradient(#fff, #f4f4f4);
  border-bottom: 0;
`
const ParamCell = styled.span`
  padding: 0 ${(p) => (p.$right ? 3 : 0)}px 0 ${(p) => (p.$right ? 0 : 5)}px;
  text-align: ${(p) => (p.$right ? 'right' : 'left')};
  letter-spacing: ${(p) => (p.$right ? '.1px' : 'inherit')};
  border-right: .4px solid #eee;
  overflow: visible;
`
const ParamFooter = styled.div`
  display: flex;
  padding: 4px 0 0 13px;
`
const ParamBtn = styled.button`
  flex: 0 0 auto;
  width: ${(p) => p.$w}px;
  height: 18px;
  margin: 0 0 0 ${(p) => p.$ml || 0}px;
  padding: 0;
  background: linear-gradient(#fafafa, #dedede);
  border: 1px solid #9d9d9d;
  border-radius: 2px;
  color: #333;
  font-family: "DejaVu Sans", sans-serif;
  font-size: 7.6px;
  letter-spacing: .3px;
`
